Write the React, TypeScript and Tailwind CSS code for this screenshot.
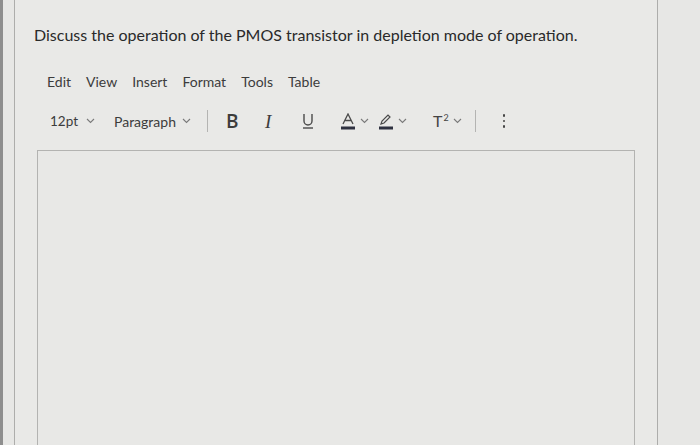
import React from "react";

const Chevron = ({ ml = "ml-[6px]" }: { ml?: string }) => (
  <svg width="9" height="6" viewBox="0 0 9 6" className={ml} fill="none" stroke="#7a7a7a" strokeWidth="1.1">
    <path d="M1 1l3.5 3.5L8 1" />
  </svg>
);

export default function App() {
  return (
    <div className="w-[700px] h-[445px] overflow-hidden flex bg-[#e7e7e5]" style={{ fontFamily: "Lato, 'Open Sans', sans-serif" }}>
      <div className="w-[3px] h-full bg-[#8e8e8e]" />
      <div className="ml-[11px] w-[644px] h-full border-l border-r border-[#adadab] bg-[#e9e9e7] flex flex-col">
        <div className="pl-[19px] pt-[24px] text-[16px] leading-[22px] text-[#2a2a2a]">
          Discuss the operation of the PMOS transistor in depletion mode of operation.
        </div>
        <div className="pl-[32px] mt-[26px] flex gap-[15px] text-[14px] leading-[20px] text-[#3c3c3c]">
          <span>Edit</span>
          <span>View</span>
          <span>Insert</span>
          <span>Format</span>
          <span>Tools</span>
          <span>Table</span>
        </div>
        <div className="pl-[35px] mt-[17px] h-[24px] flex items-center text-[#3c3c3c]">
          <span className="text-[13.5px] flex items-center">12pt<Chevron ml="ml-[8px]" /></span>
          <span className="ml-[19px] text-[14px] flex items-center">Paragraph<Chevron ml="ml-[6px]" /></span>
          <div className="ml-[16px] w-px h-[22px] bg-[#b4b4b2]" />
          <span className="ml-[18px] text-[19px] leading-none font-semibold w-[13px]" style={{ fontFamily: "'Open Sans', sans-serif" }}>B</span>
          <span className="ml-[26px] w-[12px] text-[19px] leading-none italic" style={{ fontFamily: "'Liberation Serif', serif" }}>I</span>
          <span className="ml-[25px] flex flex-col items-center">
            <svg width="12" height="16" viewBox="0 0 12 16" fill="none" stroke="#4a4a4a" strokeWidth="1.4">
              <path d="M2 1v7a4 4 0 0 0 8 0V1" />
              <path d="M1 15h10" />
            </svg>
          </span>
          <span className="ml-[26px] flex items-center">
            <svg width="16" height="17" viewBox="0 0 16 17" fill="none">
              <path d="M3 11L8 1l5 10M5 7.5h6" stroke="#4a4a4a" strokeWidth="1.3" />
              <rect x="1" y="13.5" width="14" height="3" fill="#2e3140" />
            </svg>
            <Chevron ml="ml-[4px]" />
          </span>
          <span className="ml-[9px] flex items-center">
            <svg width="16" height="17" viewBox="0 0 16 17" fill="none">
              <path d="M3 11l1-3 6-6 2 2-6 6-3 1z" stroke="#4a4a4a" strokeWidth="1.2" />
              <rect x="1" y="13.5" width="14" height="3" fill="#2e3140" />
            </svg>
            <Chevron ml="ml-[4px]" />
          </span>
          <span className="ml-[26px] flex items-center text-[#444]">
            <span className="text-[16px] leading-none">T</span>
            <span className="text-[9px] leading-none mb-[8px] ml-[1px]">2</span>
            <Chevron ml="ml-[4px]" />
          </span>
          <div className="ml-[13px] w-px h-[22px] bg-[#b4b4b2]" />
          <span className="ml-[27px] flex flex-col gap-[3px]">
            <span className="w-[2.5px] h-[2.5px] rounded-full bg-[#444]" />
            <span className="w-[2.5px] h-[2.5px] rounded-full bg-[#444]" />
            <span className="w-[2.5px] h-[2.5px] rounded-full bg-[#444]" />
          </span>
        </div>
        <div className="ml-[22px] mt-[17px] w-[598px] flex-1 border border-[#b3b3b1] bg-[#e8e8e6] mb-[-10px]" />
      </div>
    </div>
  );
}
